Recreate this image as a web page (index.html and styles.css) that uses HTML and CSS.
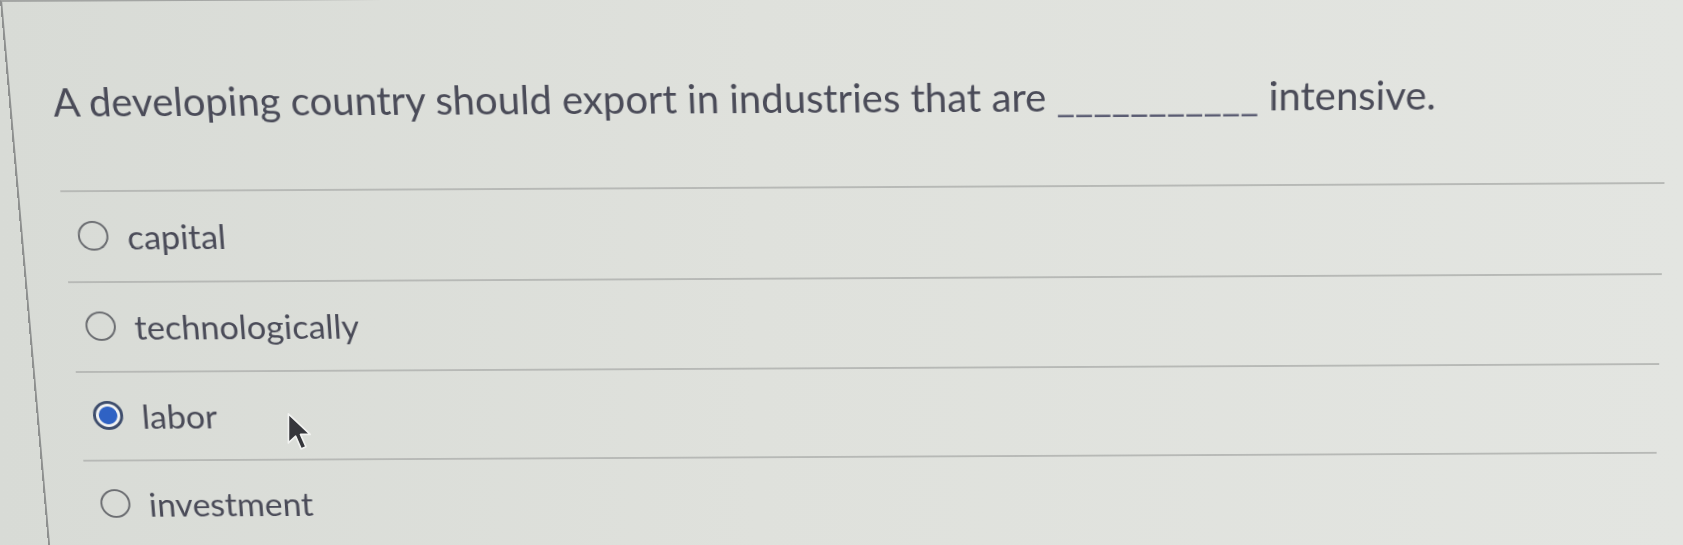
FILE: index.html
```html
<!DOCTYPE html>
<html lang="en">
<head>
  <meta charset="UTF-8">
  <meta name="viewport" content="width=device-width, initial-scale=1.0">
  <title>Question</title>
  <link rel="stylesheet" href="styles.css">
</head>
<body>
  <div class="screen">
    <div class="card">
      <p class="prompt">A developing country should export in industries that are <span class="blank">___________</span> intensive.</p>
      <ul class="choices">
        <li class="choice"><span class="radio"></span><span class="label">capital</span></li>
        <li class="choice"><span class="radio"></span><span class="label">technologically</span></li>
        <li class="choice"><span class="radio checked"></span><span class="label">labor</span></li>
        <li class="choice"><span class="radio"></span><span class="label">investment</span></li>
      </ul>
    </div>

    <!-- mouse pointer -->
    <svg class="pointer" width="29" height="42" viewBox="0 0 24 34">
      <path d="M2 2 L2 26 L8 20.5 L12.5 31 L16.5 29.2 L12 19 L20 19 Z" fill="#35363b" stroke="#f1f2f0" stroke-width="1.4" stroke-linejoin="round"/>
    </svg>
  </div>
</body>
</html>
```

FILE: styles.css
```css
html, body {
  margin: 0;
  height: 100%;
  overflow: hidden;
}
body {
  font-family: Lato, "Open Sans", sans-serif;
  color: #4a4b58;
  background: linear-gradient(90deg, #d8dbd6 0%, #dfe1dc 45%, #e3e5e1 100%);
}
.screen {
  position: relative;
  height: 545px;
  overflow: hidden;
}
.card {
  height: 640px;
  margin-left: 0;
  border-top: 2px solid #a3a5a3;
  border-left: 2px solid #8e908f;
  transform: perspective(2000px) rotateX(-8deg) skew(5deg, -0.3deg);
  transform-origin: 0 0;
}
.prompt {
  margin: 0;
  padding: 78px 0 0 42px;
  font-size: 40.3px;
  line-height: 1.2;
}
.blank {
  color: #5a5c72;
}
.choices {
  list-style: none;
  margin: 67px 14px 0 42px;
  padding: 0;
}
.choice {
  display: flex;
  align-items: center;
  gap: 19px;
  height: 95px;
  box-sizing: border-box;
  padding: 0 0 2px 14px;
  border-top: 2px solid #b7b9b6;
  font-size: 35px;
}
.radio {
  width: 27px;
  height: 27px;
  border: 2px solid #6a6c70;
  border-radius: 50%;
  flex: none;
}
.radio.checked {
  width: 25px;
  height: 25px;
  border: 3px solid #3e4d6c;
  background: radial-gradient(circle, #2f62c4 0 9px, #f1f2f2 9.8px);
}
.label {
  line-height: 1.2;
}
.pointer {
  position: absolute;
  left: 286px;
  top: 411px;
}
```
